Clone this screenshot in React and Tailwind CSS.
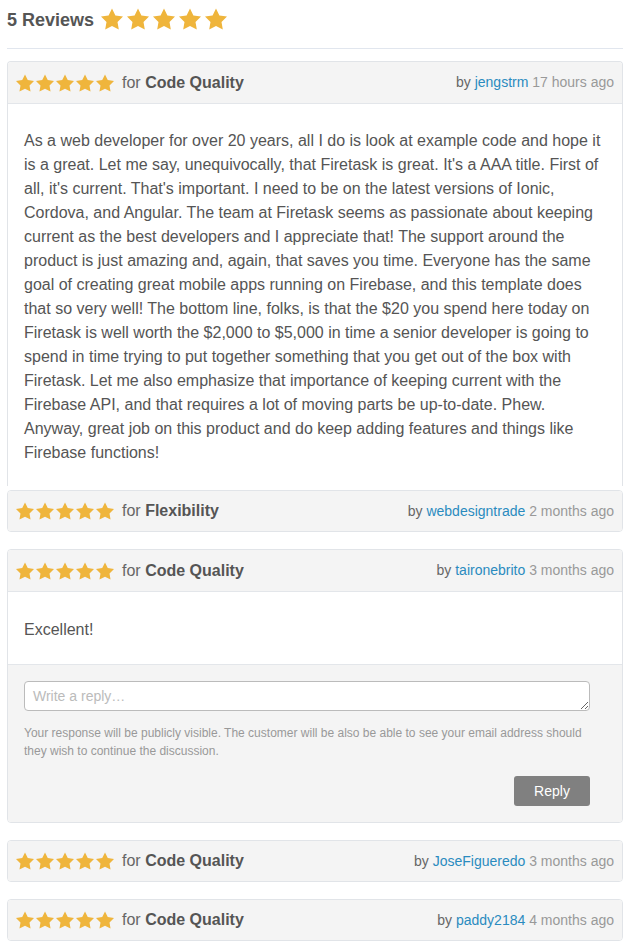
import React from "react";

const STAR = "M12 1.8l3.09 6.26 6.91 1.01-5 4.87 1.18 6.88L12 17.57l-6.18 3.25L7 13.94 2 9.07l6.91-1.01L12 1.8z";

function Stars({ size = 18, gap = "gap-[2px]" }) {
  return (
    <div className={`flex ${gap}`}>
      {[0, 1, 2, 3, 4].map((i) => (
        <svg key={i} width={size} height={size} viewBox="2 1.3 20 20">
          <path d={STAR} fill="#efb53c" />
        </svg>
      ))}
    </div>
  );
}

function Header({ category, user, time, bottomBorder }) {
  return (
    <div
      className={`flex items-center justify-between bg-[#f4f4f4] pl-2 pr-2 ${bottomBorder ? "h-[42px] border-b border-[#e3e6ea]" : "h-[40px]"}`}
    >
      <div className="flex items-center">
        <Stars />
        <span className="ml-[8px] text-[16px] text-[#666]">
          for <b className="font-bold text-[#555]">{category}</b>
        </span>
      </div>
      <div className="text-[14px] text-[#666]">
        by <span className="text-[#2a8bbf]">{user}</span>{" "}
        <span className="text-[#999]">{time}</span>
      </div>
    </div>
  );
}

export default function App() {
  return (
    <div
      className="bg-white px-[7px] pb-4 text-[#555]"
      style={{ fontFamily: '"Liberation Sans", Arial, sans-serif' }}
    >
      <div className="flex items-center border-b border-[#e1e6ee] pb-[16px] pt-[8px]">
        <h2 className="text-[18px] font-bold leading-[24px] text-[#555]">5 Reviews</h2>
        <div className="ml-[7px] -mt-[2px]">
          <Stars size={22} gap="gap-[4px]" />
        </div>
      </div>

      {/* Card 1 */}
      <div className="mt-[12px] overflow-hidden rounded-t-[4px] border-x border-t border-[#e1e4e8]">
        <Header
          category="Code Quality"
          user="jengstrm"
          time="17 hours ago"
          bottomBorder
        />
        <div className="bg-white px-4 pb-[21px] pt-[25px] text-[16px] leading-[24px] text-[#555]">
          As a web developer for over 20 years, all I do is look at example code and hope it
          is a great. Let me say, unequivocally, that Firetask is great. It's a AAA title. First of
          all, it's current. That's important. I need to be on the latest versions of Ionic,
          Cordova, and Angular. The team at Firetask seems as passionate about keeping
          current as the best developers and I appreciate that! The support around the
          product is just amazing and, again, that saves you time. Everyone has the same
          goal of creating great mobile apps running on Firebase, and this template does
          that so very well! The bottom line, folks, is that the $20 you spend here today on
          Firetask is well worth the $2,000 to $5,000 in time a senior developer is going to
          spend in time trying to put together something that you get out of the box with
          Firetask. Let me also emphasize that importance of keeping current with the
          Firebase API, and that requires a lot of moving parts be up-to-date. Phew.
          Anyway, great job on this product and do keep adding features and things like
          Firebase functions!
        </div>
      </div>

      {/* Card 2 */}
      <div className="mt-[4px] overflow-hidden rounded-[4px] border border-[#e1e4e8]">
        <Header category="Flexibility" user="webdesigntrade" time="2 months ago" />
      </div>

      {/* Card 3 */}
      <div className="mt-[17px] overflow-hidden rounded-[4px] border border-[#e1e4e8]">
        <Header category="Code Quality" user="taironebrito" time="3 months ago" bottomBorder />
        <div className="border-b border-[#e3e6ea] bg-white px-4 pb-[22px] pt-[26px] text-[16px] leading-[24px] text-[#555]">
          Excellent!
        </div>
        <div className="bg-[#f4f4f4] pb-[16px] pl-4 pr-8 pt-[16px]">
          <textarea
            rows={1}
            placeholder="Write a reply…"
            className="block h-[30px] w-full resize-y rounded-[4px] border border-[#bbb] bg-white px-2 py-[5px] text-[14px] leading-[18px] text-[#555] placeholder:text-[#bbb]"
          />
          <p className="mt-[13px] text-[12px] leading-[18px] text-[#999]">
            Your response will be publicly visible. The customer will be also be able to see your email address should
            they wish to continue the discussion.
          </p>
          <div className="mt-[16px] flex justify-end">
            <button className="h-[30px] w-[76px] rounded-[3px] bg-[#808080] text-[14px] text-white">
              Reply
            </button>
          </div>
        </div>
      </div>

      {/* Card 4 */}
      <div className="mt-[17px] overflow-hidden rounded-[4px] border border-[#e1e4e8]">
        <Header category="Code Quality" user="JoseFigueredo" time="3 months ago" />
      </div>

      {/* Card 5 */}
      <div className="mt-[17px] overflow-hidden rounded-[4px] border border-[#e1e4e8]">
        <Header category="Code Quality" user="paddy2184" time="4 months ago" />
      </div>
    </div>
  );
}
